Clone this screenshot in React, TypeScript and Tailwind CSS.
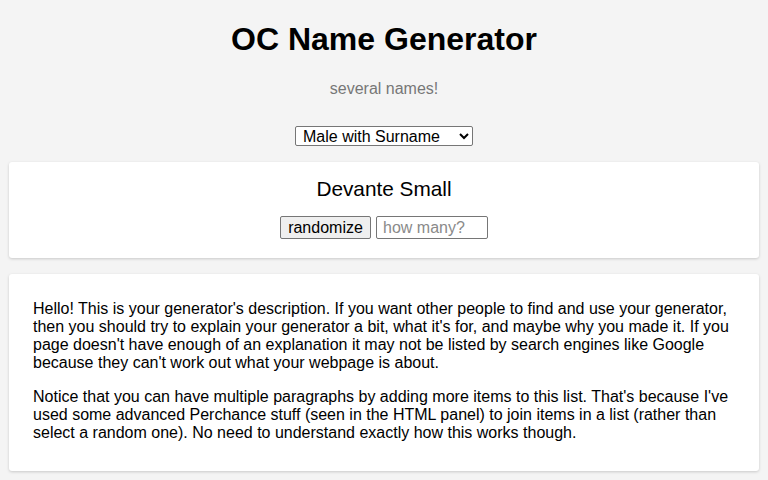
const ctrl = "font-['Liberation_Sans',Arial,sans-serif] text-[16px] leading-[18px] text-black";

export default function App() {
  return (
    <div className="min-h-[480px] bg-[#f4f4f4] pb-2 font-['Liberation_Sans',Arial,sans-serif] text-[16px] leading-[18px] text-black">
      <h1 className="pt-[21px] text-center text-[32px] font-bold leading-[37px]">
        OC Name Generator
      </h1>
      <p className="mt-[22px] text-center text-[#777]">several names!</p>
      <div className="mt-[28px] flex justify-center">
        <select
          defaultValue="male-surname"
          className={`h-[20px] w-[178px] rounded-[2px] border border-[#767676] bg-white px-[3px] ${ctrl}`}
        >
          <option value="male-surname">Male with Surname</option>
          <option value="female-surname">Female with Surname</option>
          <option value="male">Male</option>
          <option value="female">Female</option>
        </select>
      </div>

      <div className="mx-[9px] mt-[16px] flex h-[96px] flex-col items-center rounded-[3px] bg-white pt-[15px] shadow-[0_1px_3px_rgba(0,0,0,0.18)]">
        <div className="text-[20.8px] leading-[24px]">Devante Small</div>
        <div className="mt-[15px] flex gap-[5px]">
          <button className={`h-[23px] w-[91px] rounded-[2px] border border-[#767676] bg-[#efefef] ${ctrl}`}>
            randomize
          </button>
          <input
            placeholder="how many?"
            className={`h-[23px] w-[112px] rounded-[2px] border border-[#767676] bg-white px-[6px] placeholder:text-[#8a8a8a] ${ctrl}`}
          />
        </div>
      </div>

      <div className="mx-[9px] mt-[16px] rounded-[3px] bg-white px-[24px] pb-[29px] pt-[26px] text-[16px] leading-[18px] shadow-[0_1px_3px_rgba(0,0,0,0.18)]">
        <p>
          Hello! This is your generator's description. If you want other people to find and use your
          generator, then you should try to explain your generator a bit, what it's for, and maybe why
          you made it. If you page doesn't have enough of an explanation it may not be listed by search
          engines like Google because they can't work out what your webpage is about.
        </p>
        <p className="mt-[16px]">
          Notice that you can have multiple paragraphs by adding more items to this list. That's because
          I've used some advanced Perchance stuff (seen in the HTML panel) to join items in a list
          (rather than select a random one). No need to understand exactly how this works though.
        </p>
      </div>
    </div>
  );
}
